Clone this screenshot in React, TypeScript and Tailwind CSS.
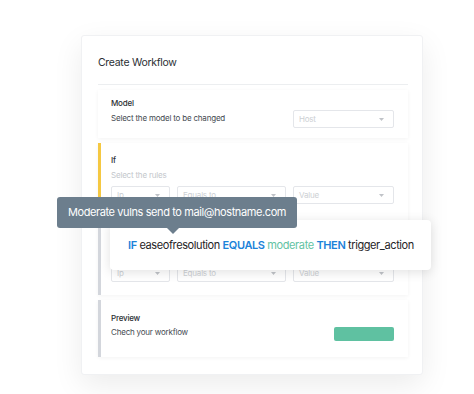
import React from "react";

const Select = ({ label, className }: { label: string; className?: string }) => (
  <div
    className={`h-[18px] flex items-center justify-between px-[5px] border border-[#e4e6ea] rounded-[2px] bg-white ${className || ""}`}
  >
    <span className="text-[8px] tracking-[-0.2px] text-[#cdd0d4] leading-none">{label}</span>
    <svg width="5" height="3" viewBox="0 0 5 3" className="mr-[4px]">
      <path d="M0 0 L5 0 L2.5 3 Z" fill="#c0c3c8" />
    </svg>
  </div>
);

const RuleRow = () => (
  <div className="flex gap-[7px]">
    <Select label="Ip" className="w-[59px]" />
    <Select label="Equals to" className="w-[109px]" />
    <Select label="Value" className="w-[101px]" />
  </div>
);

export default function App() {
  return (
    <div
      className="relative w-[474px] h-[394px] bg-white overflow-hidden"
      style={{ fontFamily: "Inter, 'Liberation Sans', sans-serif" }}
    >
      {/* CARD */}
      <div className="ml-[81px] mt-[35px] w-[342px] h-[340px] bg-white rounded-[3px] border border-[#f0f1f3] shadow-[0_10px_30px_rgba(0,0,0,0.08)] pl-[16px] pr-[14px] pt-[19px]">
        <h1 className="text-[10.5px] tracking-[-0.3px] leading-[16px] text-[#2b2f33]">Create Workflow</h1>
        <div className="mt-[13px] h-[1px] bg-[#eceef0]" />

        {/* MODEL */}
        <div className="mt-[5px] h-[48px] bg-white shadow-[0_1px_4px_rgba(0,0,0,0.05)] pl-[13px] pr-[14px] pt-[8px] flex justify-between">
          <div className="flex flex-col">
            <span className="text-[8px] tracking-[-0.2px] leading-[11px] font-medium text-[#2b2f33]">Model</span>
            <span className="mt-[4px] text-[8px] tracking-[-0.2px] leading-[11px] text-[#444a50]">Select the model to be changed</span>
          </div>
          <Select label="Host" className="w-[101px] mt-[12px]" />
        </div>

        {/* IF */}
        <div className="mt-[5px] h-[152px] bg-white shadow-[0_1px_4px_rgba(0,0,0,0.05)] flex">
          <div className="w-[3px] flex flex-col">
            <div className="h-[54px] bg-[#f5c842]" />
            <div className="flex-1 bg-[#d3d6dc]" />
          </div>
          <div className="flex-1 pl-[10px] pr-[14px] pt-[12px]">
            <div className="text-[8px] tracking-[-0.2px] leading-[11px] font-medium text-[#2b2f33]">If</div>
            <div className="mt-[4px] text-[8px] tracking-[-0.2px] leading-[11px] text-[#c3c7cc]">Select the rules</div>
            <div className="mt-[5px]">
              <RuleRow />
            </div>
            <div className="mt-[60px]">
              <RuleRow />
            </div>
          </div>
        </div>

        {/* PREVIEW */}
        <div className="mt-[5px] h-[57px] bg-white shadow-[0_1px_4px_rgba(0,0,0,0.05)] flex">
          <div className="w-[3px] bg-[#d3d6dc]" />
          <div className="flex-1 pl-[10px] pr-[14px] pt-[13px] flex justify-between">
            <div className="flex flex-col">
              <span className="text-[8px] tracking-[-0.2px] leading-[11px] font-medium text-[#2b2f33]">Preview</span>
              <span className="mt-[3px] text-[8px] tracking-[-0.2px] leading-[11px] text-[#444a50]">Chech your workflow</span>
            </div>
            <div className="w-[60px] h-[14px] mt-[14px] rounded-[2px] bg-[#5fc1a1]" />
          </div>
        </div>
      </div>

      {/* RULE POPOVER */}
      <div className="absolute left-[110px] top-[220px] w-[321px] h-[50px] bg-white rounded-[4px] shadow-[0_2px_12px_rgba(0,0,0,0.12)] flex items-center pl-[18px]">
        <span className="text-[11px] tracking-[-0.4px] text-[#1f2326] whitespace-nowrap">
          <span className="font-semibold text-[#1c82d9]">IF</span> easeofresolution{" "}
          <span className="font-semibold text-[#1c82d9]">EQUALS</span>{" "}
          <span className="text-[#62c3a3]">moderate</span>{" "}
          <span className="font-semibold text-[#1c82d9]">THEN</span> trigger_action
        </span>
      </div>

      {/* TOOLTIP */}
      <div className="absolute left-[57px] top-[197px] w-[240px] h-[31px] bg-[#6c7e8d] rounded-[3px] flex items-center justify-center">
        <span className="text-[11px] tracking-[-0.4px] text-white whitespace-nowrap">Moderate vulns send to mail@hostname.com</span>
        <div className="absolute left-[110px] top-[31px] w-0 h-0 border-l-[6px] border-r-[6px] border-t-[6px] border-l-transparent border-r-transparent border-t-[#6c7e8d]" />
      </div>
    </div>
  );
}
